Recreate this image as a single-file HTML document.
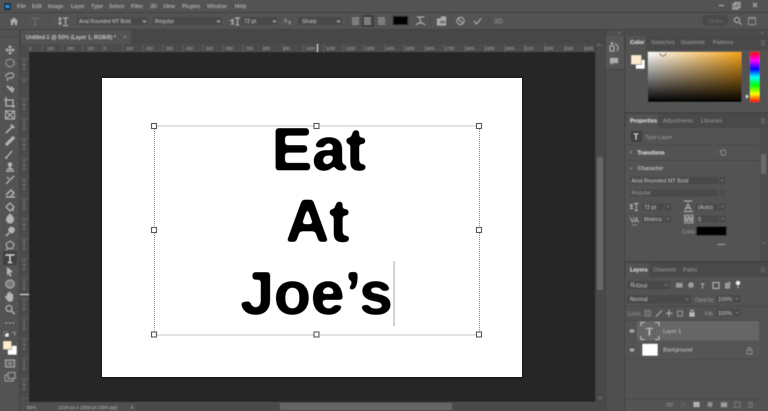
<!DOCTYPE html>
<html><head><meta charset="utf-8"><title>Photoshop</title>
<style>
html,body{margin:0;padding:0;background:#535353;overflow:hidden}
svg{display:block}
text{font-family:"Liberation Sans",sans-serif;font-size:5.5px;fill:#b8b8b8}
.b{fill:#d8d8d8;font-weight:bold}
.d{fill:#969696}
.r{font-size:4.2px;fill:#a0a0a0}
.v{font-size:3.8px;fill:#9c9c9c;writing-mode:vertical-rl;text-orientation:upright}
.s{stroke:#acacac;stroke-width:1;fill:none}
.f{fill:#acacac}
.big{font-size:60.5px;font-weight:bold;fill:#000;stroke:#000;stroke-width:.5px}
</style></head><body>
<svg width="768" height="411" viewBox="0 0 768 411" xmlns="http://www.w3.org/2000/svg">
<defs>
<filter id="bl" x="0" y="0" width="100%" height="100%"><feGaussianBlur stdDeviation="0.45"/></filter>
<filter id="bt" x="-5%" y="-5%" width="110%" height="110%"><feGaussianBlur stdDeviation="0.35"/></filter>
<filter id="rd" x="-5%" y="-5%" width="110%" height="110%" color-interpolation-filters="sRGB"><feGaussianBlur stdDeviation="1.5"/><feComponentTransfer><feFuncA type="linear" slope="5" intercept="-1.9"/></feComponentTransfer></filter>
<filter id="sh" x="-5%" y="-5%" width="110%" height="110%"><feGaussianBlur stdDeviation="1.2"/></filter>
<linearGradient id="g1"><stop offset="0" stop-color="#fff"/><stop offset="1" stop-color="#f5a418"/></linearGradient>
<linearGradient id="g2" x2="0" y2="1"><stop offset="0" stop-color="#000" stop-opacity="0"/><stop offset="1" stop-color="#000"/></linearGradient>
<linearGradient id="hue" x2="0" y2="1"><stop offset="0" stop-color="#f00"/><stop offset=".17" stop-color="#f0f"/><stop offset=".34" stop-color="#00f"/><stop offset=".5" stop-color="#0ff"/><stop offset=".67" stop-color="#0f0"/><stop offset=".84" stop-color="#ff0"/><stop offset="1" stop-color="#f00"/></linearGradient>
<pattern id="tx" width="20.1" height="8" patternUnits="userSpaceOnUse" x="22"><rect width=".6" height="8" fill="#686868"/></pattern>
<pattern id="ty" width="9" height="20" patternUnits="userSpaceOnUse" y="18"><rect width="9" height=".6" fill="#686868"/></pattern>
</defs>
<g filter="url(#bl)">
<rect width="768" height="411" fill="#535353"/>
<!-- menu -->
<rect y="12" width="768" height="1" fill="#434343"/>
<rect x="4" y="3" width="7" height="7" rx="1" fill="#0b2a4a"/><rect x="5.5" y="5" width="4" height="3" fill="#2a8fd8"/>
<text x="17" y="8">File</text><text x="32" y="8">Edit</text><text x="48" y="8">Image</text><text x="71" y="8">Layer</text><text x="91" y="8">Type</text><text x="109" y="8">Select</text><text x="131" y="8">Filter</text><text x="150" y="8">3D</text><text x="163" y="8">View</text><text x="182" y="8">Plugins</text><text x="207" y="8">Window</text><text x="235" y="8">Help</text>
<rect x="719" y="5" width="5" height="1" class="f"/>
<rect x="733" y="4" width="5" height="5" class="s" stroke-width=".8"/><rect x="735" y="2.500" width="5" height="5" class="s" stroke-width=".8"/>
<path d="M753 3l4 4M757 3l-4 4" class="s"/>
<!-- options -->
<rect y="13" width="768" height="16" fill="#535353"/>
<rect y="29" width="768" height="1" fill="#434343"/>
<path d="M10 21l4-3.500 4 3.500h-1v4h-2v-2.500h-2v2.500h-2v-4z" class="f"/>
<path d="M31.500 18h7v2M35 18v7M33.500 25h3" stroke="#6e6e6e" fill="none"/>
<rect x="25" y="15" width=".7" height="12" fill="#4a4a4a"/><rect x="49" y="15" width=".7" height="12" fill="#4a4a4a"/>
<path d="M60 18v6M58.500 19.500l1.500-2 1.500 2M58.500 22.500l1.500 2 1.500-2M63 18h5M65.500 18v6M63 25.500h5" class="s" stroke-width=".7"/>
<rect x="77" y="17" width="71" height="8" fill="#484848"/><text x="79" y="22.800" style="font-size:5px">Arial Rounded MT Bold</text><path d="M143 20.500l1.500 1.500 1.500-1.500" class="s" stroke-width=".6"/>
<rect x="153" y="17" width="69" height="8" fill="#484848"/><text x="155" y="22.800">Regular</text><path d="M217 20.500l1.500 1.500 1.500-1.500" class="s" stroke-width=".6"/>
<path d="M231 24h3M232.500 19v5M230 20.500h4M235 18h5M237.500 18v7M236 25h3" class="s" stroke-width=".8"/>
<rect x="242" y="17" width="20" height="8" fill="#484848"/><text x="244" y="22.800">72 pt</text>
<rect x="262" y="17" width="15" height="8" fill="#484848"/><path d="M273 20.500l1.500 1.500 1.500-1.500" class="s" stroke-width=".6"/>
<text x="284" y="22" style="font-size:5px">a</text><text x="288" y="24" style="font-size:5px">a</text>
<rect x="298" y="17" width="44" height="8" fill="#484848"/><text x="302" y="22.800">Sharp</text><path d="M337 20.500l1.500 1.500 1.500-1.500" class="s" stroke-width=".6"/>
<rect x="347" y="15" width=".7" height="12" fill="#4a4a4a"/>
<rect x="362" y="15" width="12" height="12" rx="1" fill="#404040"/>
<path d="M352 18h7M352 20h7M352 22h7M352 24h7" stroke="#9a9a9a"/>
<path d="M364 18h7M364 20h7M364 22h7M364 24h7" stroke="#a0a0a0"/>
<path d="M378 18h7M378 20h7M378 22h7M378 24h7" stroke="#9a9a9a"/>
<rect x="393" y="16" width="15" height="9" fill="#000" stroke="#3a3a3a"/>
<path d="M417 17h7M419 17c2 3 2 5 1 7M416 25c3-3 6-3 9 0" class="s" stroke-width=".8"/>
<rect x="437" y="16.500" width="9" height="9" class="f"/><rect x="437" y="16.500" width="4" height="2" fill="#535353"/><rect x="440" y="20.500" width="5" height="3" fill="#777"/>
<circle cx="460.500" cy="21" r="3.600" class="s" stroke-width="1.100"/><path d="M458 18.500l5 5" class="s"/>
<path d="M474 21l2.500 3 4.500-5.500" class="s" stroke-width="1.200"/>
<text x="494" y="23.500" style="font-size:7px;font-weight:bold;fill:#808080">3D</text>
<rect x="430" y="15" width=".7" height="12" fill="#4a4a4a"/><rect x="450" y="15" width=".7" height="12" fill="#4a4a4a"/><rect x="488" y="15" width=".7" height="12" fill="#4a4a4a"/>
<rect x="702" y="15" width="26" height="11" rx="5.500" fill="#484848"/><text x="708" y="22.800" style="fill:#6e6e6e">Share</text>
<circle cx="737" cy="20" r="2.500" class="s"/><path d="M739 22l2.500 2.500" class="s" stroke-width="1.200"/>
<rect x="748.500" y="17.500" width="7" height="7" stroke="#8a8a8a" fill="none"/><rect x="748" y="17" width="8" height="2" fill="#8a8a8a"/>
<!-- tabs row -->
<rect y="30" width="605" height="14" fill="#474747"/>
<rect x="21" y="30" width="110" height="14" fill="#535353"/>
<text x="26" y="39" style="fill:#d8d8d8">Untitled-1 @ 50% (Layer 1, RGB/8) *</text>
<path d="M123.500 35.500l3 3M126.500 35.500l-3 3" stroke="#808080" stroke-width=".7"/>
<text x="3" y="34" class="r">»</text>
<!-- rulers -->
<rect x="20" y="44" width="575" height="8" fill="#4b4b4b"/>
<rect x="20" y="44" width="575" height="8" fill="url(#tx)"/>
<rect x="20" y="44" width="9" height="358" fill="#4b4b4b"/>
<rect x="20" y="52" width="9" height="350" fill="url(#ty)"/>
<text class="r" x="29" y="50">0</text><text class="r" x="47" y="50">100</text><text class="r" x="67" y="50">200</text><text class="r" x="87" y="50">100</text><text class="r" x="104" y="50">0</text><text class="r" x="126" y="50">100</text><text class="r" x="146" y="50">200</text><text class="r" x="166" y="50">300</text><text class="r" x="186" y="50">400</text><text class="r" x="206" y="50">500</text><text class="r" x="226" y="50">600</text><text class="r" x="246" y="50">700</text><text class="r" x="263" y="50">800</text><text class="r" x="283" y="50">900</text><text class="r" x="306" y="50">1000</text><text class="r" x="326" y="50">1100</text><text class="r" x="346" y="50">1200</text><text class="r" x="365" y="50">1300</text><text class="r" x="385" y="50">1400</text><text class="r" x="405" y="50">1500</text><text class="r" x="425" y="50">1600</text><text class="r" x="445" y="50">1700</text><text class="r" x="465" y="50">1800</text><text class="r" x="485" y="50">1900</text><text class="r" x="505" y="50">2000</text><text class="r" x="524" y="50">2100</text><text class="r" x="544" y="50">2200</text><text class="r" x="564" y="50">2300</text><text class="r" x="584" y="50">2400</text>
<rect x="317" y="44" width="1" height="8" fill="#ccc"/>
<text class="v" x="24" y="59">100</text><text class="v" x="24" y="79">0</text><text class="v" x="24" y="99">100</text><text class="v" x="24" y="119">200</text><text class="v" x="24" y="139">300</text><text class="v" x="24" y="159">400</text><text class="v" x="24" y="179">500</text><text class="v" x="24" y="199">600</text><text class="v" x="24" y="219">700</text><text class="v" x="24" y="239">800</text><text class="v" x="24" y="259">900</text><text class="v" x="24" y="279">100</text><text class="v" x="24" y="299">110</text><text class="v" x="24" y="319">120</text><text class="v" x="24" y="339">130</text><text class="v" x="24" y="359">140</text><text class="v" x="24" y="379">150</text>
<rect x="20" y="294" width="9" height="1" fill="#ccc"/>
<!-- canvas bg -->
<rect x="29" y="52" width="566" height="350" fill="#282828"/>
<rect x="100.500" y="77" width="423" height="302" fill="#000" opacity=".3" filter="url(#sh)"/>
<!-- status -->
<rect x="20" y="402" width="585" height="9" fill="#4f4f4f"/>
<text x="27" y="409" style="font-size:4.6px;fill:#b0b0b0">50%</text><text x="58" y="409" style="font-size:4.800px;fill:#a8a8a8">2100 px x 1500 px (300 ppi)</text>
<path d="M131 406l1.500 1.500-1.500 1.500" stroke="#aaa" fill="none" stroke-width=".6"/>
<rect x="136" y="403" width="459" height="8" fill="#484848"/>
<rect x="280" y="403" width="172" height="7" fill="#666"/>
<!-- v scrollbar -->
<rect x="595" y="44" width="10" height="367" fill="#484848"/>
<rect x="595" y="44" width="1" height="358" fill="#3e3e3e"/>
<rect x="597" y="157" width="6" height="133" fill="#686868"/>
<path d="M598 397l2 2 2-2" stroke="#808080" fill="none" stroke-width=".7"/>
<path d="M597 46l2-2 2 2" stroke="#808080" fill="none" stroke-width=".7"/>
<!-- toolbar -->
<rect x="0" y="30" width="20" height="381" fill="#535353"/>
<rect x="19" y="30" width="1" height="381" fill="#434343"/>
<rect x="0" y="36" width="19" height="1" fill="#444"/>
<rect x="3" y="251" width="14" height="14" rx="1" fill="#404040"/>
<g fill="none" stroke="#b4b4b4" stroke-width=".9">
<path d="M10 46v8M6 50h8M8.500 47.500l1.500-1.500 1.500 1.500M8.500 52.500l1.500 1.500 1.500-1.500M7.500 48.500l-1.500 1.500 1.500 1.500M12.500 48.500l1.500 1.500-1.500 1.500"/>
<ellipse cx="10" cy="63" rx="4.200" ry="3.800" stroke-dasharray="1.500 .8"/>
<path d="M6 77c-1-3 3-4 5-4s4 2 2 4-5 1-5 1c-1 1-1 2 0 3"/>
<path d="M7 86l6 6M11 87l3 3" stroke-width="1.800"/>
<path d="M6 97v9h9M4 100h9v8" stroke-width="1.100"/>
<rect x="5.500" y="111" width="9" height="8"/><path d="M5.500 111l9 8M14.500 111l-9 8"/>
<path d="M6 133l6-6" stroke-width="1.400"/><path d="M11 125l3 3" stroke-width="2"/>
<path d="M6 145l8-8" stroke-width="3"/>
<path d="M6 158l6-7" stroke-width="1.200"/><path d="M5.500 158.500l1.500-1.500" stroke-width="1.800"/>
<path d="M6 171h8M7 169h6" stroke-width="1.300"/><path d="M10 169v-3" stroke-width="1.800"/><circle cx="10" cy="164.500" r="1.700" fill="#b4b4b4"/>
<path d="M6 184l8-8M7 177l2 2" stroke-width="1.200"/>
<path d="M6 197h9M6 195l5-5 3 3-3 3" stroke-width="1.300"/>
<path d="M6 207l4-4 4 4-4 4zM13 208v3" stroke-width="1.100"/>
<path d="M10 214c2 2 3.500 3.500 3.500 5.500a3.500 3.500 0 0 1-7 0c0-2 1.500-3.500 3.500-5.500z" fill="#b4b4b4"/>
<circle cx="11.500" cy="230" r="2.800" fill="#b4b4b4"/><path d="M9 233l-3 3" stroke-width="1.300"/>
<path d="M10 241l4 3-1.500 4.500h-5L6 244zM7 249l-1 1.500"/>
<path d="M5.500 255h9M10 255v7M8 262.500h4" stroke="#d4d4d4" stroke-width="1.200"/>
<ellipse cx="10" cy="284" rx="4.300" ry="4" fill="#7a7a7a"/>
<circle cx="9" cy="308.500" r="3" stroke-width="1.100"/><path d="M11.500 311l3 3" stroke-width="1.300"/>
<path d="M5.500 323h1.500M9 323h1.500M12.500 323h1.500" stroke-width="1.100"/>
</g>
<path d="M7 267l6 5-3 .5 1.500 3.500-1.500.5-1.500-3-1.500 2z" fill="#b4b4b4"/>
<path d="M7 297v-3c0-1 1.500-1 1.500 0v-1.500c0-1 1.500-1 1.500 0v1c0-1 1.500-1 1.500 0v1c0-1 1.500-1 1.500 0v4c0 2-1 3-3 3s-2.500-1-3.500-2.500l-1.500-2c-.5-1 .8-1.500 2-.5z" fill="#b4b4b4"/>
<rect x="4" y="332" width="3.500" height="3.500" fill="#000" stroke="#bbb" stroke-width=".5"/><rect x="5.500" y="333.500" width="3" height="3" fill="#eee"/>
<path d="M12 332.500h3v3" stroke="#aaa" stroke-width=".7" fill="none"/>
<rect x="8" y="346" width="8.500" height="8.500" fill="#fff"/>
<rect x="3" y="341" width="8.500" height="8.500" fill="#fdeccf" stroke="#555" stroke-width=".5"/>
<rect x="5.500" y="360" width="9" height="7" fill="#666" stroke="#aaa" stroke-width=".9"/><circle cx="10" cy="363.500" r="1.600" fill="#8a8a8a"/>
<rect x="5" y="375" width="8" height="6" fill="none" stroke="#aaa" stroke-width=".8"/><rect x="8" y="372.500" width="7" height="6" fill="#535353" stroke="#aaa" stroke-width=".8"/>
<!-- dock -->
<rect x="605" y="30" width="20" height="381" fill="#505050"/>
<rect x="605" y="30" width="1" height="381" fill="#434343"/>
<rect x="624" y="30" width="1" height="381" fill="#434343"/>
<rect x="606" y="36" width="18" height="33" fill="#575757"/>
<rect x="606" y="69" width="18" height="1" fill="#454545"/>
<text x="618" y="34" class="r">«</text>
<path d="M610 46h4v5h-4zM615 44c3 1 4 4 2 7" class="s" stroke-width="1.100"/><circle cx="612" cy="43.500" r="1.300" class="f"/>
<path d="M610 58h8v5h-5l-2 2v-2h-1z" class="f"/>
<!-- right panels -->
<rect x="625" y="30" width="143" height="381" fill="#535353"/>
<rect x="625" y="30" width="143" height="6" fill="#4c4c4c"/>
<text x="761" y="34" class="r">»</text>
<rect x="625" y="36" width="143" height="14" fill="#484848"/>
<rect x="626" y="36" width="20" height="14" fill="#535353"/>
<text x="630" y="44" class="b">Color</text><text x="651" y="44" class="d">Swatches</text><text x="681" y="44" class="d">Gradients</text><text x="713" y="44" class="d">Patterns</text>
<path d="M761 41h4M761 43h4M761 45h4" stroke="#909090" stroke-width=".6"/>
<rect x="636" y="60" width="8.500" height="8.500" fill="#fff"/>
<rect x="631" y="55" width="10.500" height="9.500" fill="#fdeccf" stroke="#555" stroke-width=".5"/>
<rect x="648" y="52" width="93.500" height="50" fill="url(#g1)"/>
<rect x="648" y="52" width="93.500" height="50" fill="url(#g2)"/>
<path d="M660 53a3 3 0 0 0 6 0" stroke="#333" fill="none" stroke-width=".8"/>
<rect x="750" y="52" width="9.500" height="50" fill="url(#hue)"/>
<path d="M746 94.500l3 2-3 2z" fill="#ddd"/>
<!-- properties -->
<rect x="625" y="112" width="143" height="2" fill="#434343"/>
<rect x="625" y="114" width="143" height="14" fill="#484848"/>
<rect x="626" y="114" width="32" height="14" fill="#535353"/>
<text x="630" y="122.500" class="b">Properties</text><text x="663" y="122.500" class="d">Adjustments</text><text x="701" y="122.500" class="d">Libraries</text>
<path d="M761 119h4M761 121h4M761 123h4" stroke="#909090" stroke-width=".6"/>
<rect x="631" y="131" width="11" height="11" fill="#404040"/><text x="633.500" y="139.500" style="font-size:8px;font-weight:bold;fill:#ccc">T</text>
<text x="645" y="139" class="d">Type Layer</text>
<rect x="625" y="145" width="135" height=".7" fill="#474747"/>
<path d="M630 150.500l1.500 1.500-1.500 1.500" stroke="#909090" fill="none" stroke-width=".7"/>
<text x="637.500" y="154.500" class="b">Transform</text>
<path d="M722 150a2.800 2.800 0 1 1-1.500 3M720.500 149.500v2.500h2.500" stroke="#909090" fill="none" stroke-width=".8"/>
<rect x="625" y="160" width="135" height=".7" fill="#474747"/>
<path d="M629.500 167.500l1.500 1.500 1.500-1.500" stroke="#909090" fill="none" stroke-width=".7"/>
<text x="637.500" y="170" style="font-weight:bold;fill:#b0b0b0">Character</text>
<rect x="630" y="177" width="88" height="7" fill="#484848"/><text x="631.500" y="182.500">Arial Rounded MT Bold</text>
<rect x="719.500" y="177" width="6" height="7" fill="#484848"/><path d="M721 180l1.200 1.200 1.200-1.200" stroke="#aaa" fill="none" stroke-width=".5"/>
<rect x="630" y="189.500" width="88" height="7" fill="#484848"/><text x="631.500" y="194.500" class="d">Regular</text>
<rect x="719.500" y="189.500" width="6" height="7" fill="#4d4d4d"/>
<path d="M630 208.500h3M631.500 204v4.500M629.500 205.500h3.500M634 203.500h4.500M636.200 203.500v7M634.800 210.500h3" class="s" stroke-width=".8"/>
<rect x="642" y="203.500" width="22" height="7" fill="#484848"/><text x="644" y="208.800">72 pt</text>
<rect x="665" y="203.500" width="6.500" height="7" fill="#484848"/><path d="M667 206l1.200 1.200 1.200-1.200" stroke="#aaa" fill="none" stroke-width=".5"/>
<path d="M685 210l3-6 3 6M686 208h4M684 201h8M684 211.500h9" class="s" stroke-width=".7"/>
<rect x="696" y="203.500" width="22" height="7" fill="#484848"/><text x="698" y="208.800">(Auto)</text>
<rect x="719.500" y="203.500" width="6.500" height="7" fill="#484848"/><path d="M721.500 206l1.200 1.200 1.200-1.200" stroke="#aaa" fill="none" stroke-width=".5"/>
<text x="630" y="222.500" style="font-size:7px;fill:#b8b8b8">VA</text><path d="M632 225h5" stroke="#aaa" stroke-width=".6"/>
<rect x="642" y="215.500" width="22" height="7" fill="#484848"/><text x="644" y="220.800">Metrics</text>
<rect x="665" y="215.500" width="6.500" height="7" fill="#484848"/><path d="M667 218l1.200 1.200 1.200-1.200" stroke="#aaa" fill="none" stroke-width=".5"/>
<rect x="684.500" y="215" width="8.500" height="8" fill="#777" stroke="#aaa" stroke-width=".7"/><path d="M685 217l2 4 2-4 2 4 2-4" stroke="#ccc" fill="none" stroke-width=".6"/>
<rect x="696" y="215.500" width="22" height="7" fill="#484848"/><text x="698" y="220.800">0</text>
<rect x="719.500" y="215.500" width="6.500" height="7" fill="#484848"/><path d="M721.500 218l1.200 1.200 1.200-1.200" stroke="#aaa" fill="none" stroke-width=".5"/>
<text x="682" y="233.500" class="d">Color</text>
<rect x="696.500" y="226.500" width="30" height="9" fill="#000" stroke="#3a3a3a" stroke-width=".5"/>
<path d="M718 244.500h7" stroke="#bbb" stroke-width="1" stroke-dasharray="1.300 .8"/>
<rect x="760" y="129" width="8" height="132" fill="#4d4d4d"/>
<rect x="761" y="154" width="5" height="20" fill="#6a6a6a"/>
<path d="M762 242.500l1.500 1.500 1.500-1.500" stroke="#808080" fill="none" stroke-width=".6"/>
<!-- layers -->
<rect x="625" y="261" width="143" height="2" fill="#434343"/>
<rect x="625" y="263" width="143" height="14" fill="#484848"/>
<rect x="626" y="263" width="23" height="14" fill="#535353"/>
<text x="630" y="271.500" class="b">Layers</text><text x="653" y="271.500" class="d">Channels</text><text x="683" y="271.500" class="d">Paths</text>
<path d="M761 268h4M761 270h4M761 272h4" stroke="#909090" stroke-width=".6"/>
<rect x="627" y="281" width="43" height="8.500" fill="#484848"/>
<circle cx="632.500" cy="284.500" r="1.500" stroke="#bbb" fill="none" stroke-width=".6"/><path d="M633.500 285.500l1.300 1.300" stroke="#bbb" stroke-width=".6"/>
<text x="636" y="287.500">Kind</text><path d="M665 284.500l1.200 1.200 1.200-1.200" stroke="#aaa" fill="none" stroke-width=".5"/>
<rect x="676" y="283" width="6.500" height="4.500" class="f" opacity=".8"/>
<circle cx="691" cy="285" r="2.800" class="f" opacity=".85"/>
<text x="700.500" y="288.500" style="font-size:7px;fill:#c0c0c0">T</text>
<rect x="713" y="282.500" width="6" height="6" class="s" stroke-width=".8"/>
<rect x="725" y="283" width="5" height="5.500" class="f" opacity=".8"/><rect x="728" y="282" width="2.500" height="2.500" fill="#999"/>
<circle cx="738" cy="283" r="2" fill="#eee"/><rect x="737.500" y="285.500" width="1" height="2.500" fill="#aaa"/>
<rect x="627" y="295" width="64" height="8.500" fill="#484848"/><text x="630" y="301">Normal</text><path d="M686 298.500l1.200 1.200 1.200-1.200" stroke="#aaa" fill="none" stroke-width=".5"/>
<text x="695" y="301.500" class="d">Opacity:</text><rect x="716" y="295" width="17" height="7.500" fill="#484848"/><text x="718" y="300.800">100%</text><rect x="734" y="295" width="6.500" height="7.500" fill="#484848"/><path d="M736 298l1.200 1.200 1.200-1.200" stroke="#aaa" fill="none" stroke-width=".5"/>
<rect x="625" y="306" width="143" height=".7" fill="#474747"/>
<text x="628" y="315.500" class="d">Lock:</text>
<rect x="645" y="310.500" width="5.500" height="5.500" stroke="#909090" fill="#666" stroke-width=".6"/>
<path d="M656 316.500l6-6" stroke="#aaa" stroke-width=".9"/>
<path d="M669 310v6.500M666 313.300h6.500" stroke="#aaa" stroke-width="1"/>
<rect x="677.500" y="311" width="5" height="5" stroke="#aaa" fill="none" stroke-width=".7"/>
<rect x="689.500" y="312.500" width="5" height="4" fill="#bbb"/><path d="M690.500 312.500v-1a1.500 1.500 0 0 1 3 0v1" stroke="#bbb" fill="none" stroke-width=".7"/>
<text x="705" y="315.500" class="d">Fill:</text><rect x="716" y="309" width="17" height="7.500" fill="#484848"/><text x="718" y="314.800">100%</text><rect x="734" y="309" width="6.500" height="7.500" fill="#484848"/><path d="M736 312l1.200 1.200 1.200-1.200" stroke="#aaa" fill="none" stroke-width=".5"/>
<rect x="625" y="320" width="134" height=".7" fill="#474747"/>
<rect x="625" y="321" width="134" height="19.500" fill="#666"/>
<rect x="625" y="341" width="134" height="18" fill="#555"/>
<rect x="625" y="359" width="134" height=".7" fill="#4a4a4a"/>
<rect x="625" y="321" width="12" height="38" fill="#535353"/>
<path d="M629.500 331c1.500-2 3.500-2 5 0-1.500 2-3.500 2-5 0z" fill="#ccc"/><circle cx="632" cy="331" r=".8" fill="#444"/>
<path d="M629.500 350c1.500-2 3.500-2 5 0-1.500 2-3.500 2-5 0z" fill="#ccc"/><circle cx="632" cy="350" r=".8" fill="#444"/>
<path d="M641 326v-3.500h4M655 322.500h4v3.500M659 336v3.500h-4M645 339.500h-4v-3.500" stroke="#ccc" fill="none" stroke-width=".8"/>
<text x="646" y="335" style="font-size:11px;fill:#ddd;font-family:'Liberation Serif',serif">T</text>
<text x="663" y="333" style="fill:#b8b8b8">Layer 1</text>
<rect x="642.500" y="344" width="15" height="11.500" fill="#fff"/>
<text x="663" y="351.500" style="fill:#bcbcbc;font-style:italic">Background</text>
<rect x="747" y="350" width="5" height="4" stroke="#999" fill="none" stroke-width=".7"/><path d="M748 350v-1a1.500 1.500 0 0 1 3 0v1" stroke="#999" fill="none" stroke-width=".7"/>
<rect x="625" y="399" width="134" height=".7" fill="#474747"/>
<g stroke="#808080" fill="none" stroke-width=".8">
<circle cx="668" cy="404.500" r="1.500"/><circle cx="671" cy="404.500" r="1.500"/>
<rect x="693.500" y="402" width="6" height="5" fill="#b0b0b0" stroke="none"/>
<circle cx="710" cy="404.500" r="2.400" fill="#909090"/>
<rect x="721" y="402.500" width="6" height="4.500" fill="#a0a0a0"/>
<rect x="734.500" y="402" width="5.500" height="5.500"/>
<path d="M748 403h5M749 403v4.500h3v-4.500M750 402h1"/>
</g>
<text x="681" y="407" style="font-size:6px;font-style:italic;fill:#707070">fx</text>
</g>
<!-- document -->
<rect x="102" y="78" width="420" height="299" fill="#fff"/>
<g filter="url(#rd)">
<text class="big" x="319" y="170" text-anchor="middle">Eat</text>
<text class="big" x="317.500" y="241.500" text-anchor="middle">At</text>
<text class="big" x="316.500" y="314" text-anchor="middle">Joe’s</text>
</g>
<g filter="url(#bt)">
<rect x="393.500" y="261" width="1" height="65" fill="#a8a8a8"/>
<rect x="154.500" y="126" width="325" height="209" fill="none" stroke="#8c8c8c" stroke-width="1" stroke-dasharray="1 1"/>
<g fill="#fff" stroke="#5a5a5a" stroke-width="1.100">
<rect x="151.500" y="123.500" width="5" height="5"/><rect x="314" y="123.500" width="5" height="5"/><rect x="476.500" y="123.500" width="5" height="5"/>
<rect x="151.500" y="227.500" width="5" height="5"/><rect x="476.500" y="227.500" width="5" height="5"/>
<rect x="151.500" y="332" width="5" height="5"/><rect x="314" y="332" width="5" height="5"/><rect x="476.500" y="332" width="5" height="5"/>
</g>
</g>
</svg>
</body></html>
